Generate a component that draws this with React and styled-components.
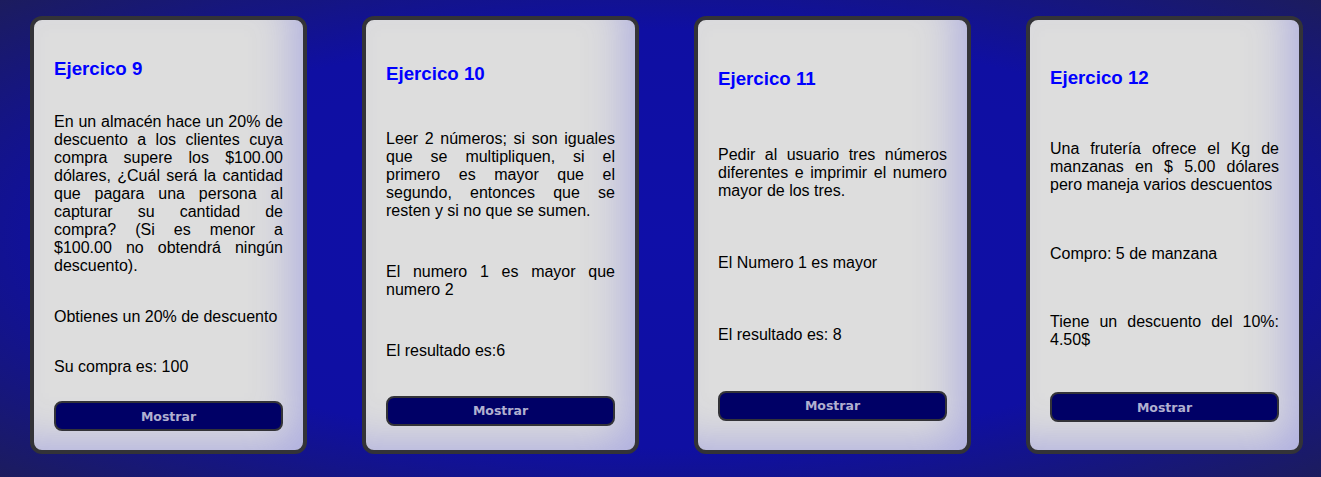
import React from "react";
import styled, { createGlobalStyle } from "styled-components";

const GlobalStyle = createGlobalStyle`
  html, body { margin: 0; padding: 0; }
  body {
    min-height: 100vh;
    background: radial-gradient(ellipse farthest-corner at 50% 50%, #0f0fa8 0%, #0f0fa2 62%, #1c1c5e 100%);
    font-family: "Liberation Sans", Arial, sans-serif;
  }
`;

const Page = styled.main`
  display: flex;
  align-items: flex-start;
  gap: 55px;
  padding: 16px 0 0 30px;
  height: 477px;
  box-sizing: border-box;
`;

const Card = styled.section`
  box-sizing: border-box;
  width: 277px;
  height: 438px;
  border: 4px solid #333338;
  border-radius: 12px;
  background: #dddddd;
  box-shadow: inset -22px -20px 40px -12px rgba(170, 170, 224, 0.9);
  padding: 23px 20px 4px;
  display: flex;
  flex-direction: column;
  justify-content: space-around;
`;

const Title = styled.h3`
  margin: 0 0 5px;
  font-size: 18.72px;
  line-height: 21.5px;
  font-weight: bold;
  color: #0000ff;
`;

const Text = styled.p`
  margin: 0;
  font-size: 16px;
  line-height: 18px;
  color: #000;
  text-align: justify;
  & + & { margin-top: 3px; }
`;

const Button = styled.button`
  box-sizing: border-box;
  width: 100%;
  height: 30px;
  margin-top: -4px;
  border: 2px solid #333338;
  border-radius: 8px;
  background: #000066;
  color: #b0b0d0;
  font-family: "DejaVu Sans", Verdana, sans-serif;
  font-weight: bold;
  font-size: 12.5px;
  cursor: pointer;
`;

const cards = [
  {
    title: "Ejercico 9",
    texts: [
      "En un almacén hace un 20% de descuento a los clientes cuya compra supere los $100.00 dólares, ¿Cuál será la cantidad que pagara una persona al capturar su cantidad de compra? (Si es menor a $100.00 no obtendrá ningún descuento).",
      "Obtienes un 20% de descuento",
      "Su compra es: 100",
    ],
  },
  {
    title: "Ejercico 10",
    texts: [
      "Leer 2 números; si son iguales que se multipliquen, si el primero es mayor que el segundo, entonces que se resten y si no que se sumen.",
      "El numero 1 es mayor que numero 2",
      "El resultado es:6",
    ],
  },
  {
    title: "Ejercico 11",
    texts: [
      "Pedir al usuario tres números diferentes e imprimir el numero mayor de los tres.",
      "El Numero 1 es mayor",
      "El resultado es: 8",
    ],
  },
  {
    title: "Ejercico 12",
    texts: [
      "Una frutería ofrece el Kg de manzanas en $ 5.00 dólares pero maneja varios descuentos",
      "Compro: 5 de manzana",
      "Tiene un descuento del 10%: 4.50$",
    ],
  },
];

export default function App() {
  return (
    <>
      <GlobalStyle />
      <Page>
        {cards.map((c) => (
          <Card key={c.title}>
            <Title>{c.title}</Title>
            {c.texts.map((t, i) => (
              <Text key={i}>{t}</Text>
            ))}
            <Button>Mostrar</Button>
          </Card>
        ))}
      </Page>
    </>
  );
}
